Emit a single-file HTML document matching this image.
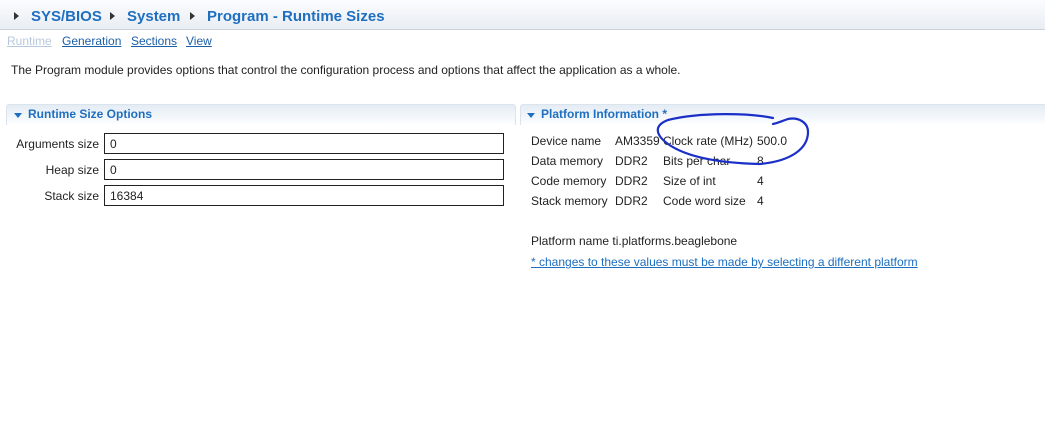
<!DOCTYPE html>
<html><head><style>
body{margin:0;width:1045px;height:430px;background:#fff;font-family:"Liberation Sans",sans-serif;font-size:12px;color:#222;position:relative;overflow:hidden}
.abs{position:absolute;white-space:nowrap}
.hdr{position:absolute;left:0;top:0;width:1045px;height:29px;background:linear-gradient(#fbfcfe,#e9eef4);border-bottom:1px solid #c9d3dd}
.t{font-weight:bold;font-size:15px;color:#1f6fc0;top:8px}
.tri{width:0;height:0;border-top:4px solid transparent;border-bottom:4px solid transparent;border-left:5px solid #333;top:12px}
.lnk{color:#1b5fa8;text-decoration:underline;top:34px}
.sec{position:absolute;top:104px;height:20px;border:1px solid #dbe4ec;border-bottom:none;border-radius:3px 3px 0 0;background:linear-gradient(#e4ecf4,#fdfeff)}
.sh{font-weight:bold;color:#1f6fc0;top:107px}
.dt{width:0;height:0;border-left:4px solid transparent;border-right:4px solid transparent;border-top:5px solid #1f6fc0;top:113px}
.inp{position:absolute;left:104px;width:398px;height:19px;border:1px solid #222;background:#fff}
.inp span{position:absolute;left:5px;top:3px}
.lb{right:946px;text-align:right}
</style></head><body>
<div class="hdr"></div>
<div class="abs tri" style="left:14px"></div>
<div class="abs t" style="left:31px">SYS/BIOS</div>
<div class="abs tri" style="left:110px"></div>
<div class="abs t" style="left:127px">System</div>
<div class="abs tri" style="left:190px"></div>
<div class="abs t" style="left:207px">Program - Runtime Sizes</div>
<div class="abs lnk" style="left:7px;color:#b7c9dc">Runtime</div>
<div class="abs lnk" style="left:62px">Generation</div>
<div class="abs lnk" style="left:131px">Sections</div>
<div class="abs lnk" style="left:186px">View</div>
<div class="abs" style="left:11px;top:63px">The Program module provides options that control the configuration process and options that affect the application as a whole.</div>
<div class="sec" style="left:6px;width:508px"></div>
<div class="abs dt" style="left:14px"></div>
<div class="abs sh" style="left:28px">Runtime Size Options</div>
<div class="abs lb" style="top:137px">Arguments size</div>
<div class="abs lb" style="top:163px">Heap size</div>
<div class="abs lb" style="top:189px">Stack size</div>
<div class="inp" style="top:133px"><span>0</span></div>
<div class="inp" style="top:159px"><span>0</span></div>
<div class="inp" style="top:185px"><span>16384</span></div>
<div class="sec" style="left:520px;width:530px"></div>
<div class="abs dt" style="left:527px"></div>
<div class="abs sh" style="left:541px">Platform Information *</div>
<div class="abs" style="left:531px;top:134px">Device name</div>
<div class="abs" style="left:531px;top:154px">Data memory</div>
<div class="abs" style="left:531px;top:174px">Code memory</div>
<div class="abs" style="left:531px;top:194px">Stack memory</div>
<div class="abs" style="left:615px;top:134px">AM3359</div>
<div class="abs" style="left:615px;top:154px">DDR2</div>
<div class="abs" style="left:615px;top:174px">DDR2</div>
<div class="abs" style="left:615px;top:194px">DDR2</div>
<div class="abs" style="left:663px;top:134px">Clock rate (MHz)</div>
<div class="abs" style="left:663px;top:154px">Bits per char</div>
<div class="abs" style="left:663px;top:174px">Size of int</div>
<div class="abs" style="left:663px;top:194px">Code word size</div>
<div class="abs" style="left:757px;top:134px">500.0</div>
<div class="abs" style="left:757px;top:154px">8</div>
<div class="abs" style="left:757px;top:174px">4</div>
<div class="abs" style="left:757px;top:194px">4</div>
<div class="abs" style="left:531px;top:234px">Platform name ti.platforms.beaglebone</div>
<div class="abs" style="left:531px;top:255px;color:#1b6fc2;text-decoration:underline">* changes to these values must be made by selecting a different platform</div>
<svg class="abs" style="left:0;top:0" width="1045" height="430">
<path d="M773 118 C750 113 700 112 668 120 C652 126 657 136 668 144 C685 156 715 163 760 164 C792 161 808 148 808 132 C808 122 798 117 788 119 C782 121 778 123 773 124" fill="none" stroke="#1a2fc8" stroke-width="2.2" stroke-linecap="round"/>
</svg>
</body></html>
